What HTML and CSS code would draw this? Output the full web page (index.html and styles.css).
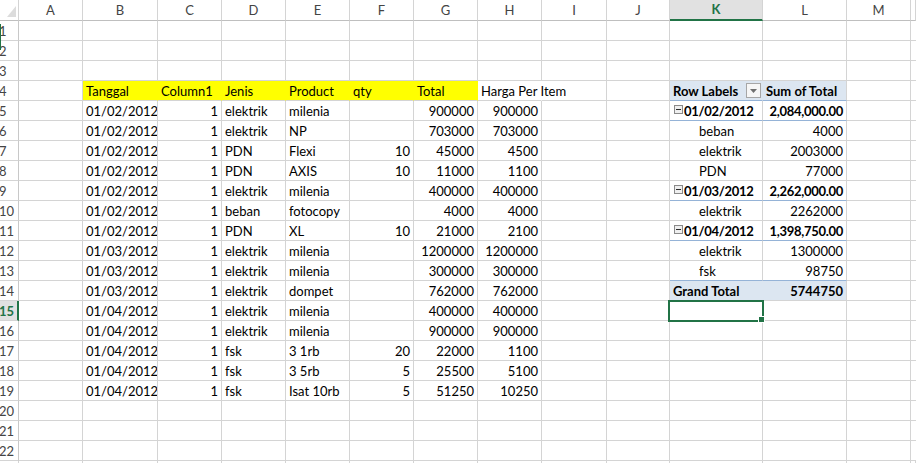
FILE: index.html
```html
<!DOCTYPE html>
<html lang="id">
<head>
<meta charset="utf-8">
<title>Sheet</title>
<link rel="stylesheet" href="styles.css">
</head>
<body>
<div class="sheet">
  <div class="row hdr">
    <div class="c corner"><svg width="18" height="20" viewBox="0 0 18 20"><polygon points="16,6 16,17 7,17" fill="#dcdcdc"/></svg></div>
    <div class="c">A</div><div class="c">B</div><div class="c">C</div><div class="c">D</div><div class="c">E</div><div class="c">F</div><div class="c">G</div><div class="c">H</div><div class="c">I</div><div class="c">J</div><div class="c on">K</div><div class="c">L</div><div class="c">M</div><div class="c"></div>
  </div>

  <div class="row"><div class="c rh">1</div><div class="c"></div><div class="c"></div><div class="c"></div><div class="c"></div><div class="c"></div><div class="c"></div><div class="c"></div><div class="c"></div><div class="c"></div><div class="c"></div><div class="c"></div><div class="c"></div><div class="c"></div><div class="c"></div></div>
  <div class="row"><div class="c rh">2</div><div class="c"></div><div class="c"></div><div class="c"></div><div class="c"></div><div class="c"></div><div class="c"></div><div class="c"></div><div class="c"></div><div class="c"></div><div class="c"></div><div class="c"></div><div class="c"></div><div class="c"></div><div class="c"></div></div>
  <div class="row"><div class="c rh">3</div><div class="c"></div><div class="c"></div><div class="c"></div><div class="c"></div><div class="c"></div><div class="c"></div><div class="c"></div><div class="c"></div><div class="c"></div><div class="c"></div><div class="c"></div><div class="c"></div><div class="c"></div><div class="c"></div></div>

  <div class="row"><div class="c rh">4</div><div class="c"></div><div class="c y">Tanggal</div><div class="c y">Column1</div><div class="c y">Jenis</div><div class="c y">Product</div><div class="c y">qty</div><div class="c y">Total</div><div class="c ov">Harga Per Item</div><div class="c"></div><div class="c"></div><div class="c ph pk phk"><span>Row Labels</span><span class="dd"><svg width="7" height="4" viewBox="0 0 7 4"><path d="M0 0H7L3.5 4Z" fill="#6f6f6f"/></svg></span></div><div class="c ph">Sum of Total</div><div class="c"></div><div class="c"></div></div>

  <div class="row"><div class="c rh">5</div><div class="c"></div><div class="c">01/02/2012</div><div class="c n">1</div><div class="c">elektrik</div><div class="c">milenia</div><div class="c n"></div><div class="c n">900000</div><div class="c n">900000</div><div class="c"></div><div class="c"></div><div class="c pg"><svg class="tog" width="9" height="9" viewBox="0 0 9 9"><rect x="0.5" y="0.5" width="8" height="8" fill="#efefef" stroke="#8a8a8a"/><path d="M2 4.5H7" stroke="#2b2b2b"/></svg>01/02/2012</div><div class="c n pg">2,084,000.00</div><div class="c"></div><div class="c"></div></div>

  <div class="row"><div class="c rh">6</div><div class="c"></div><div class="c">01/02/2012</div><div class="c n">1</div><div class="c">elektrik</div><div class="c">NP</div><div class="c n"></div><div class="c n">703000</div><div class="c n">703000</div><div class="c"></div><div class="c"></div><div class="c pi">beban</div><div class="c n">4000</div><div class="c"></div><div class="c"></div></div>

  <div class="row"><div class="c rh">7</div><div class="c"></div><div class="c">01/02/2012</div><div class="c n">1</div><div class="c">PDN</div><div class="c">Flexi</div><div class="c n">10</div><div class="c n">45000</div><div class="c n">4500</div><div class="c"></div><div class="c"></div><div class="c pi">elektrik</div><div class="c n">2003000</div><div class="c"></div><div class="c"></div></div>

  <div class="row"><div class="c rh">8</div><div class="c"></div><div class="c">01/02/2012</div><div class="c n">1</div><div class="c">PDN</div><div class="c">AXIS</div><div class="c n">10</div><div class="c n">11000</div><div class="c n">1100</div><div class="c"></div><div class="c"></div><div class="c pi">PDN</div><div class="c n">77000</div><div class="c"></div><div class="c"></div></div>

  <div class="row"><div class="c rh">9</div><div class="c"></div><div class="c">01/02/2012</div><div class="c n">1</div><div class="c">elektrik</div><div class="c">milenia</div><div class="c n"></div><div class="c n">400000</div><div class="c n">400000</div><div class="c"></div><div class="c"></div><div class="c pg"><svg class="tog" width="9" height="9" viewBox="0 0 9 9"><rect x="0.5" y="0.5" width="8" height="8" fill="#efefef" stroke="#8a8a8a"/><path d="M2 4.5H7" stroke="#2b2b2b"/></svg>01/03/2012</div><div class="c n pg">2,262,000.00</div><div class="c"></div><div class="c"></div></div>

  <div class="row"><div class="c rh">10</div><div class="c"></div><div class="c">01/02/2012</div><div class="c n">1</div><div class="c">beban</div><div class="c">fotocopy</div><div class="c n"></div><div class="c n">4000</div><div class="c n">4000</div><div class="c"></div><div class="c"></div><div class="c pi">elektrik</div><div class="c n">2262000</div><div class="c"></div><div class="c"></div></div>

  <div class="row"><div class="c rh">11</div><div class="c"></div><div class="c">01/02/2012</div><div class="c n">1</div><div class="c">PDN</div><div class="c">XL</div><div class="c n">10</div><div class="c n">21000</div><div class="c n">2100</div><div class="c"></div><div class="c"></div><div class="c pg"><svg class="tog" width="9" height="9" viewBox="0 0 9 9"><rect x="0.5" y="0.5" width="8" height="8" fill="#efefef" stroke="#8a8a8a"/><path d="M2 4.5H7" stroke="#2b2b2b"/></svg>01/04/2012</div><div class="c n pg">1,398,750.00</div><div class="c"></div><div class="c"></div></div>

  <div class="row"><div class="c rh">12</div><div class="c"></div><div class="c">01/03/2012</div><div class="c n">1</div><div class="c">elektrik</div><div class="c">milenia</div><div class="c n"></div><div class="c n">1200000</div><div class="c n">1200000</div><div class="c"></div><div class="c"></div><div class="c pi">elektrik</div><div class="c n">1300000</div><div class="c"></div><div class="c"></div></div>

  <div class="row"><div class="c rh">13</div><div class="c"></div><div class="c">01/03/2012</div><div class="c n">1</div><div class="c">elektrik</div><div class="c">milenia</div><div class="c n"></div><div class="c n">300000</div><div class="c n">300000</div><div class="c"></div><div class="c"></div><div class="c pi bb">fsk</div><div class="c n bb">98750</div><div class="c"></div><div class="c"></div></div>

  <div class="row"><div class="c rh">14</div><div class="c"></div><div class="c">01/03/2012</div><div class="c n">1</div><div class="c">elektrik</div><div class="c">dompet</div><div class="c n"></div><div class="c n">762000</div><div class="c n">762000</div><div class="c"></div><div class="c"></div><div class="c pt pk">Grand Total</div><div class="c n pt">5744750</div><div class="c"></div><div class="c"></div></div>

  <div class="row"><div class="c rh on">15</div><div class="c"></div><div class="c">01/04/2012</div><div class="c n">1</div><div class="c">elektrik</div><div class="c">milenia</div><div class="c n"></div><div class="c n">400000</div><div class="c n">400000</div><div class="c"></div><div class="c"></div><div class="c sel"></div><div class="c"></div><div class="c"></div><div class="c"></div></div>

  <div class="row"><div class="c rh">16</div><div class="c"></div><div class="c">01/04/2012</div><div class="c n">1</div><div class="c">elektrik</div><div class="c">milenia</div><div class="c n"></div><div class="c n">900000</div><div class="c n">900000</div><div class="c"></div><div class="c"></div><div class="c"></div><div class="c"></div><div class="c"></div><div class="c"></div></div>

  <div class="row"><div class="c rh">17</div><div class="c"></div><div class="c">01/04/2012</div><div class="c n">1</div><div class="c">fsk</div><div class="c">3 1rb</div><div class="c n">20</div><div class="c n">22000</div><div class="c n">1100</div><div class="c"></div><div class="c"></div><div class="c"></div><div class="c"></div><div class="c"></div><div class="c"></div></div>

  <div class="row"><div class="c rh">18</div><div class="c"></div><div class="c">01/04/2012</div><div class="c n">1</div><div class="c">fsk</div><div class="c">3 5rb</div><div class="c n">5</div><div class="c n">25500</div><div class="c n">5100</div><div class="c"></div><div class="c"></div><div class="c"></div><div class="c"></div><div class="c"></div><div class="c"></div></div>

  <div class="row"><div class="c rh">19</div><div class="c"></div><div class="c">01/04/2012</div><div class="c n">1</div><div class="c">fsk</div><div class="c">Isat 10rb</div><div class="c n">5</div><div class="c n">51250</div><div class="c n">10250</div><div class="c"></div><div class="c"></div><div class="c"></div><div class="c"></div><div class="c"></div><div class="c"></div></div>

  <div class="row"><div class="c rh">20</div><div class="c"></div><div class="c"></div><div class="c"></div><div class="c"></div><div class="c"></div><div class="c"></div><div class="c"></div><div class="c"></div><div class="c"></div><div class="c"></div><div class="c"></div><div class="c"></div><div class="c"></div><div class="c"></div></div>
  <div class="row"><div class="c rh">21</div><div class="c"></div><div class="c"></div><div class="c"></div><div class="c"></div><div class="c"></div><div class="c"></div><div class="c"></div><div class="c"></div><div class="c"></div><div class="c"></div><div class="c"></div><div class="c"></div><div class="c"></div><div class="c"></div></div>
  <div class="row"><div class="c rh">22</div><div class="c"></div><div class="c"></div><div class="c"></div><div class="c"></div><div class="c"></div><div class="c"></div><div class="c"></div><div class="c"></div><div class="c"></div><div class="c"></div><div class="c"></div><div class="c"></div><div class="c"></div><div class="c"></div></div>
  <div class="row tail"><div class="c"></div><div class="c"></div><div class="c"></div><div class="c"></div><div class="c"></div><div class="c"></div><div class="c"></div><div class="c"></div><div class="c"></div><div class="c"></div><div class="c"></div><div class="c"></div><div class="c"></div><div class="c"></div><div class="c"></div></div>
</div>
<div class="edge"></div>
</body>
</html>
```

FILE: styles.css
```css
html, body {
  margin: 0;
  padding: 0;
  background: #ffffff;
}

body {
  font-family: Lato, "Liberation Sans", sans-serif;
  font-size: 13px;
  color: #000000;
  width: 916px;
  height: 468px;
  overflow: hidden;
  position: relative;
}

.sheet {
  width: 916px;
}

.row {
  display: grid;
  grid-template-columns: 19px 64px 75px 64px 64px 64px 64px 64px 64px 65px 63px 93px 84px 64px 1fr;
  height: 20px;
}

.c {
  box-sizing: border-box;
  border-right: 1px solid #d4d4d4;
  border-bottom: 1px solid #d4d4d4;
  padding: 2px 3px 0 3px;
  line-height: 17px;
  white-space: nowrap;
  overflow: hidden;
}

.n {
  text-align: right;
}

/* column header row */
.hdr {
  height: 21px;
}

.hdr .c {
  padding: 0;
  line-height: 20px;
  text-align: center;
  color: #444444;
  border-bottom-color: #bfbfbf;
}

.hdr .corner svg {
  display: block;
}

.hdr .on {
  background: #e1e1e1;
  color: #217346;
  font-weight: bold;
  border-bottom: 2px solid #217346;
  line-height: 19px;
}

/* row headers */
.rh {
  padding-left: 0;
  text-indent: -1px;
  color: #444444;
  border-right-color: #c8c8c8;
}

.rh.on {
  background: #e1e1e1;
  color: #217346;
  font-weight: bold;
  border-right: 2px solid #217346;
}

/* data table header */
.y {
  background: #ffff00;
  border-right-color: #ffff00;
}

.ov {
  overflow: visible;
  border-right-color: transparent;
}

/* pivot table */
.ph {
  background: #dce6f1;
  font-weight: bold;
  border-bottom-color: #95b3d7;
}

.phk {
  display: flex;
  justify-content: space-between;
  align-items: flex-start;
  padding-right: 1px;
  border-right-color: #dce6f1;
}

.dd {
  width: 15px;
  height: 15px;
  box-sizing: border-box;
  border: 1px solid #a6a6a6;
  background: #f6f6f6;
  display: flex;
  align-items: center;
  justify-content: center;
}

.dd svg {
  display: block;
}

.pg {
  font-weight: bold;
  letter-spacing: -0.3px;
  border-bottom-color: #95b3d7;
}

.tog {
  vertical-align: 2px;
  margin: 0 1px 0 1px;
}

.pi {
  padding-left: 29px;
}

.bb {
  border-bottom-color: #95b3d7;
}

.pt {
  background: #dce6f1;
  font-weight: bold;
}

.pt.pk {
  border-right-color: #dce6f1;
}

/* active cell */
.sel {
  position: relative;
  overflow: visible;
}

.sel::after {
  content: "";
  position: absolute;
  left: -2px;
  top: -1px;
  width: 96px;
  height: 22px;
  box-sizing: border-box;
  border: 2px solid #217346;
}

.sel::before {
  content: "";
  position: absolute;
  left: 88px;
  top: 15px;
  width: 7px;
  height: 7px;
  box-sizing: border-box;
  background: #217346;
  border: 1px solid #ffffff;
  z-index: 1;
}

.tail {
  height: 2px;
}

.tail .c {
  border-bottom: none;
  padding: 0;
}

.edge {
  position: absolute;
  left: 0;
  top: 24px;
  width: 1px;
  height: 26px;
  background: #217346;
}
```
